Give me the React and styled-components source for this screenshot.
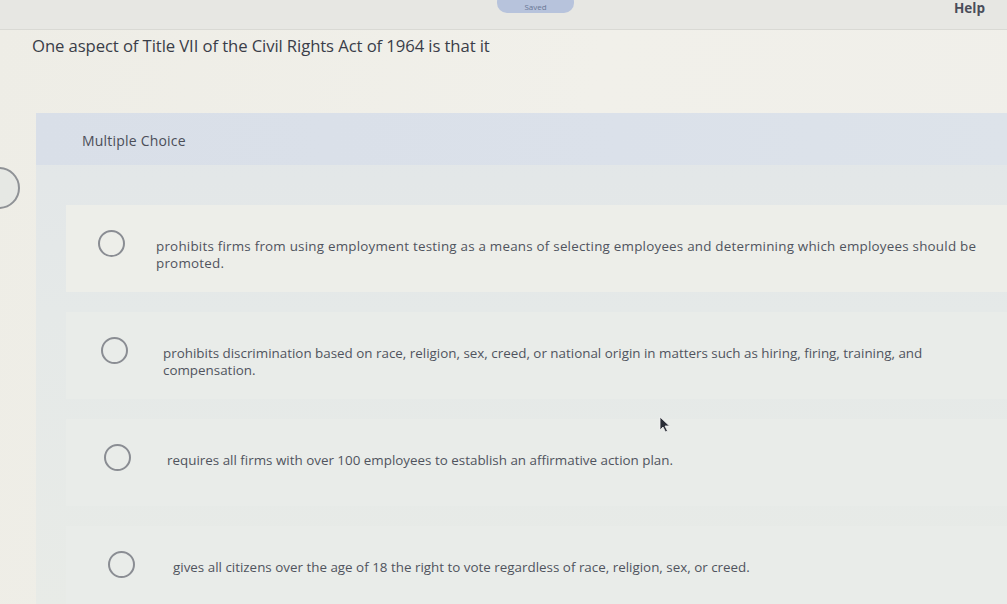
import React from "react";
import styled, { createGlobalStyle } from "styled-components";

const Global = createGlobalStyle`
  html, body { margin: 0; padding: 0; }
  body {
    width: 1007px; height: 604px; overflow: hidden;
    background: #efeee8;
    font-family: "Open Sans", Lato, Arial, sans-serif;
  }
`;

const Page = styled.div`
  position: relative;
  width: 1007px;
  height: 604px;
  overflow: hidden;
  background: linear-gradient(100deg, #eeede6 0%, #f1f0ea 55%, #f0efea 100%);
`;

const TopBar = styled.header`
  position: relative;
  height: 30px;
  background: #e7e7e3;
  border-bottom: 1px solid #d9d9d4;
  display: flex;
  align-items: flex-start;
  justify-content: flex-end;
  padding: 0 22px 0 0;
  box-sizing: border-box;
`;

const SavedPill = styled.div`
  position: absolute;
  left: 497px;
  top: -8px;
  width: 77px;
  height: 21px;
  border-radius: 10px;
  background: #b7c3dc;
  color: #6a7896;
  font-size: 8px;
  display: flex;
  align-items: flex-end;
  justify-content: center;
  padding-bottom: 2px;
  box-sizing: border-box;
  line-height: 1;
`;

const Help = styled.span`
  font-size: 13.5px;
  font-weight: 700;
  color: #4a4d5a;
  line-height: 16px;
`;

const Question = styled.p`
  margin: 0;
  padding: 6px 0 0 32px;
  font-size: 16.7px;
  color: #3a3d48;
  line-height: 20px;
  letter-spacing: -0.1px;
`;

const SideButton = styled.div`
  position: absolute;
  left: -22px;
  top: 167px;
  width: 38px;
  height: 38px;
  border-radius: 50%;
  border: 2px solid #8f9296;
  background: #e6e8e4;
`;

const Panel = styled.section`
  margin: 57px 0 0 36px;
  background: linear-gradient(180deg, #e2e6e8 0%, #e5e9e8 40%, #e8ebe7 100%);
  min-height: 500px;
`;

const PanelHeader = styled.div`
  height: 52px;
  background: linear-gradient(90deg, #d9dfe8 0%, #dbe1ea 60%, #dde3ea 100%);
  display: flex;
  align-items: center;
  padding: 2px 0 0 46px;
  box-sizing: border-box;
  font-size: 14px;
  letter-spacing: 0.2px;
  color: #4b4e58;
`;

const Options = styled.div`
  display: flex;
  flex-direction: column;
  gap: 20px;
  padding: 40px 0 0 30px;
`;

const OptionCard = styled.label`
  height: 87px;
  box-sizing: border-box;
  display: flex;
  align-items: flex-start;
  padding: 32px 0 0 ${(p) => p.$indent}px;
  background: ${(p) => (p.$light ? "#edeee9" : "#e9ece9")};
`;

const Radio = styled.span`
  flex: none;
  width: 27px;
  height: 27px;
  margin-top: -7px;
  border-radius: 50%;
  border: 2px solid #8a8d93;
  box-sizing: border-box;
`;

const OptionText = styled.span`
  margin-left: ${(p) => p.$gap}px;
  max-width: ${(p) => p.$max}px;
  font-size: 13.4px;
  line-height: 17px;
  padding-top: 1px;
  letter-spacing: ${(p) => p.$track}px;
  color: #50545e;
`;

const Cursor = styled.svg`
  position: absolute;
  left: 659px;
  top: 416px;
`;

const options = [
  {
    text: "prohibits firms from using employment testing as a means of selecting employees and determining which employees should be promoted.",
    indent: 32,
    gap: 31,
    max: 840,
    track: 0.22,
    light: true,
  },
  {
    text: "prohibits discrimination based on race, religion, sex, creed, or national origin in matters such as hiring, firing, training, and compensation.",
    indent: 35,
    gap: 35,
    max: 790,
    track: 0,
  },
  {
    text: "requires all firms with over 100 employees to establish an affirmative action plan.",
    indent: 38,
    gap: 36,
    max: 830,
    track: 0,
  },
  {
    text: "gives all citizens over the age of 18 the right to vote regardless of race, religion, sex, or creed.",
    indent: 42,
    gap: 38,
    max: 830,
    track: 0,
  },
];

export default function App() {
  return (
    <Page>
      <Global />
      <TopBar>
        <SavedPill>Saved</SavedPill>
        <Help>Help</Help>
      </TopBar>
      <Question>One aspect of Title VII of the Civil Rights Act of 1964 is that it</Question>
      <SideButton />
      <Panel>
        <PanelHeader>Multiple Choice</PanelHeader>
        <Options>
          {options.map((o, i) => (
            <OptionCard key={i} $indent={o.indent} $light={o.light}>
              <Radio />
              <OptionText $gap={o.gap} $max={o.max} $track={o.track}>
                {o.text}
              </OptionText>
            </OptionCard>
          ))}
        </Options>
      </Panel>
      <Cursor width="12" height="17" viewBox="0 0 12 17">
        <path d="M1 1 L1 14 L4 11 L6.5 16 L8.5 15 L6 10 L10.5 10 Z" fill="#2a2d36" stroke="#f2f2f2" strokeWidth="0.8" />
      </Cursor>
    </Page>
  );
}
